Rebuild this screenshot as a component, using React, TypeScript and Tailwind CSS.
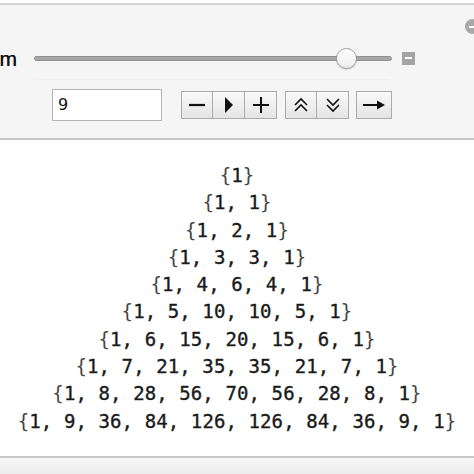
import type { ReactNode } from "react";

const ROWS: number[][] = (() => {
  const out: number[][] = [[1]];
  for (let n = 1; n <= 9; n++) {
    const prev = out[n - 1];
    const row = [1];
    for (let k = 1; k < n; k++) row.push(prev[k - 1] + prev[k]);
    row.push(1);
    out.push(row);
  }
  return out;
})();

function Btn({ children, first }: { children: ReactNode; first?: boolean }) {
  return (
    <div
      className={
        "flex h-[28px] w-[32px] items-center justify-center border-y border-r border-[#ababab] bg-gradient-to-b from-[#fafafa] to-[#e4e4e4] " +
        (first ? "border-l" : "")
      }
    >
      {children}
    </div>
  );
}

export default function App() {
  return (
    <div className="relative flex h-[474px] w-[474px] flex-col overflow-hidden bg-white">
      <div className="h-[3px] bg-white" />

      {/* control panel */}
      <div className="relative flex h-[137px] flex-col border-y-2 border-t-[#d6d6d6] border-b-[#c6c6c6] bg-[#f5f5f5] pt-[41px]">
        {/* clipped close glyph on the right edge */}
        <div className="absolute left-[465px] top-[14px] flex h-[15px] w-[15px] items-center justify-center rounded-full bg-[#a8a8a8]">
          <div className="h-[2px] w-[7px] bg-white" />
        </div>

        <div className="flex h-[24px] items-center">
          <div className="flex w-[17px] justify-end overflow-visible">
            <span className="font-['Liberation_Sans',sans-serif] text-[21px] leading-none text-[#111] [text-shadow:0_0_0.4px_#111]">
              m
            </span>
          </div>
          <div className="relative ml-[17px] h-[5px] w-[358px] rounded-full border border-[#8f8f8f] bg-[#a6a6a6]">
            <div className="absolute left-[301px] top-[-9px] h-[21px] w-[21px] rounded-full border border-[#9b9b9b] bg-gradient-to-b from-white to-[#ececec] shadow-[0_1px_1px_rgba(0,0,0,0.15)]" />
          </div>
          <div className="ml-[10px] flex h-[13px] w-[13px] items-center justify-center bg-[#a4a4a4]">
            <div className="h-[2px] w-[7px] bg-white" />
          </div>
        </div>

        <div className="ml-[33px] mt-[9px] h-px w-[357px] bg-[#efefef]" />

        <div className="mt-[9px] flex items-center">
          <div className="ml-[52px] flex h-[32px] w-[110px] items-center border border-[#b4b4b4] bg-white pl-[5px] font-['DejaVu_Sans',sans-serif] text-[16px] text-[#111]">
            9
          </div>

          <div className="ml-[19px] flex">
            <Btn first>
              <svg width="18" height="18" viewBox="0 0 18 18">
                <path d="M1 9h16" stroke="#111" strokeWidth="2.2" />
              </svg>
            </Btn>
            <Btn>
              <svg width="12" height="18" viewBox="0 0 12 18">
                <path d="M2 1l8 8-8 8z" fill="#111" />
              </svg>
            </Btn>
            <Btn>
              <svg width="18" height="18" viewBox="0 0 18 18">
                <path d="M1 9h16M9 1v16" stroke="#111" strokeWidth="2" />
              </svg>
            </Btn>
          </div>

          <div className="ml-[8px] flex">
            <Btn first>
              <svg width="16" height="16" viewBox="0 0 16 16" fill="none">
                <path d="M2 8l6-6 6 6M2 14l6-6 6 6" stroke="#111" strokeWidth="1.6" />
              </svg>
            </Btn>
            <Btn>
              <svg width="16" height="16" viewBox="0 0 16 16" fill="none">
                <path d="M2 2l6 6 6-6M2 8l6 6 6-6" stroke="#111" strokeWidth="1.6" />
              </svg>
            </Btn>
          </div>

          <div className="ml-[7px] flex h-[28px] w-[36px] items-center justify-center border border-[#ababab] bg-gradient-to-b from-[#fafafa] to-[#e4e4e4]">
            <svg width="24" height="12" viewBox="0 0 24 12">
              <path d="M1 6h16" stroke="#111" strokeWidth="2" />
              <path d="M15 1.5l8 4.5-8 4.5z" fill="#111" />
            </svg>
          </div>
        </div>
      </div>

      {/* output: rows of the triangle */}
      <div className="flex flex-1 flex-col items-center pt-[22px] font-['DejaVu_Sans_Mono',monospace] text-[19px] leading-[27.3px] tracking-[0.1px] text-[#1a1a1a] [-webkit-text-stroke:0.35px_#1a1a1a]">
        {ROWS.map((row, i) => (
          <div key={i} className="whitespace-pre">
            <span className="text-[#444] [-webkit-text-stroke:0px]">{"{"}</span>
            {row.join(", ")}
            <span className="text-[#444] [-webkit-text-stroke:0px]">{"}"}</span>
          </div>
        ))}
      </div>

      <div className="h-[18px] border-t-2 border-[#c8c8c8] bg-gradient-to-b from-[#f6f6f6] to-[#ececec]" />
    </div>
  );
}
